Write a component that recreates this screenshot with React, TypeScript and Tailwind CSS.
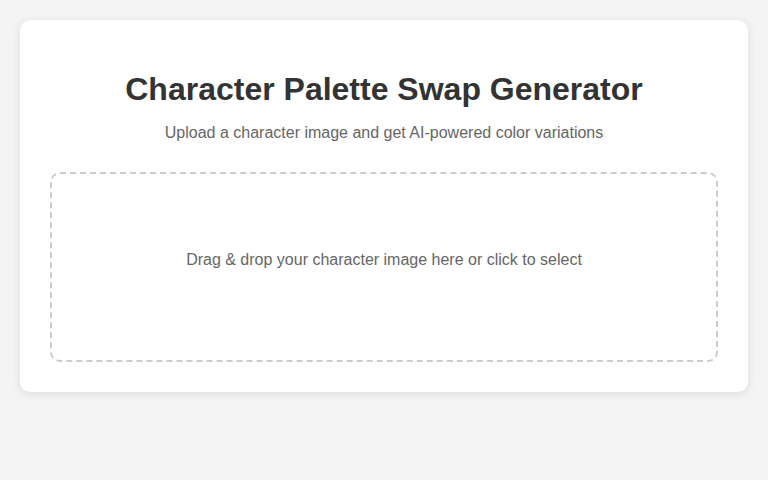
import React from 'react';

export default function App() {
  return (
    <div className="min-h-[480px] bg-[#f4f4f4] p-5 font-['Liberation_Sans',Arial,sans-serif]">
      <div className="rounded-[10px] bg-white p-[30px] text-center shadow-[0_2px_10px_rgba(0,0,0,0.1)]">
        <h1 className="mt-[21px] text-[32px] font-bold leading-[37px] text-[#333]">
          Character Palette Swap Generator
        </h1>
        <p className="mt-[16px] text-base leading-[18px] text-[#666]">
          Upload a character image and get AI-powered color variations
        </p>
        <div className="mt-[30px] cursor-pointer rounded-[10px] border-2 border-dashed border-[#ccc] pt-[77px] pb-[91px]">
          <p className="text-base leading-[18px] text-[#666]">
            Drag &amp; drop your character image here or click to select
          </p>
        </div>
      </div>
    </div>
  );
}
